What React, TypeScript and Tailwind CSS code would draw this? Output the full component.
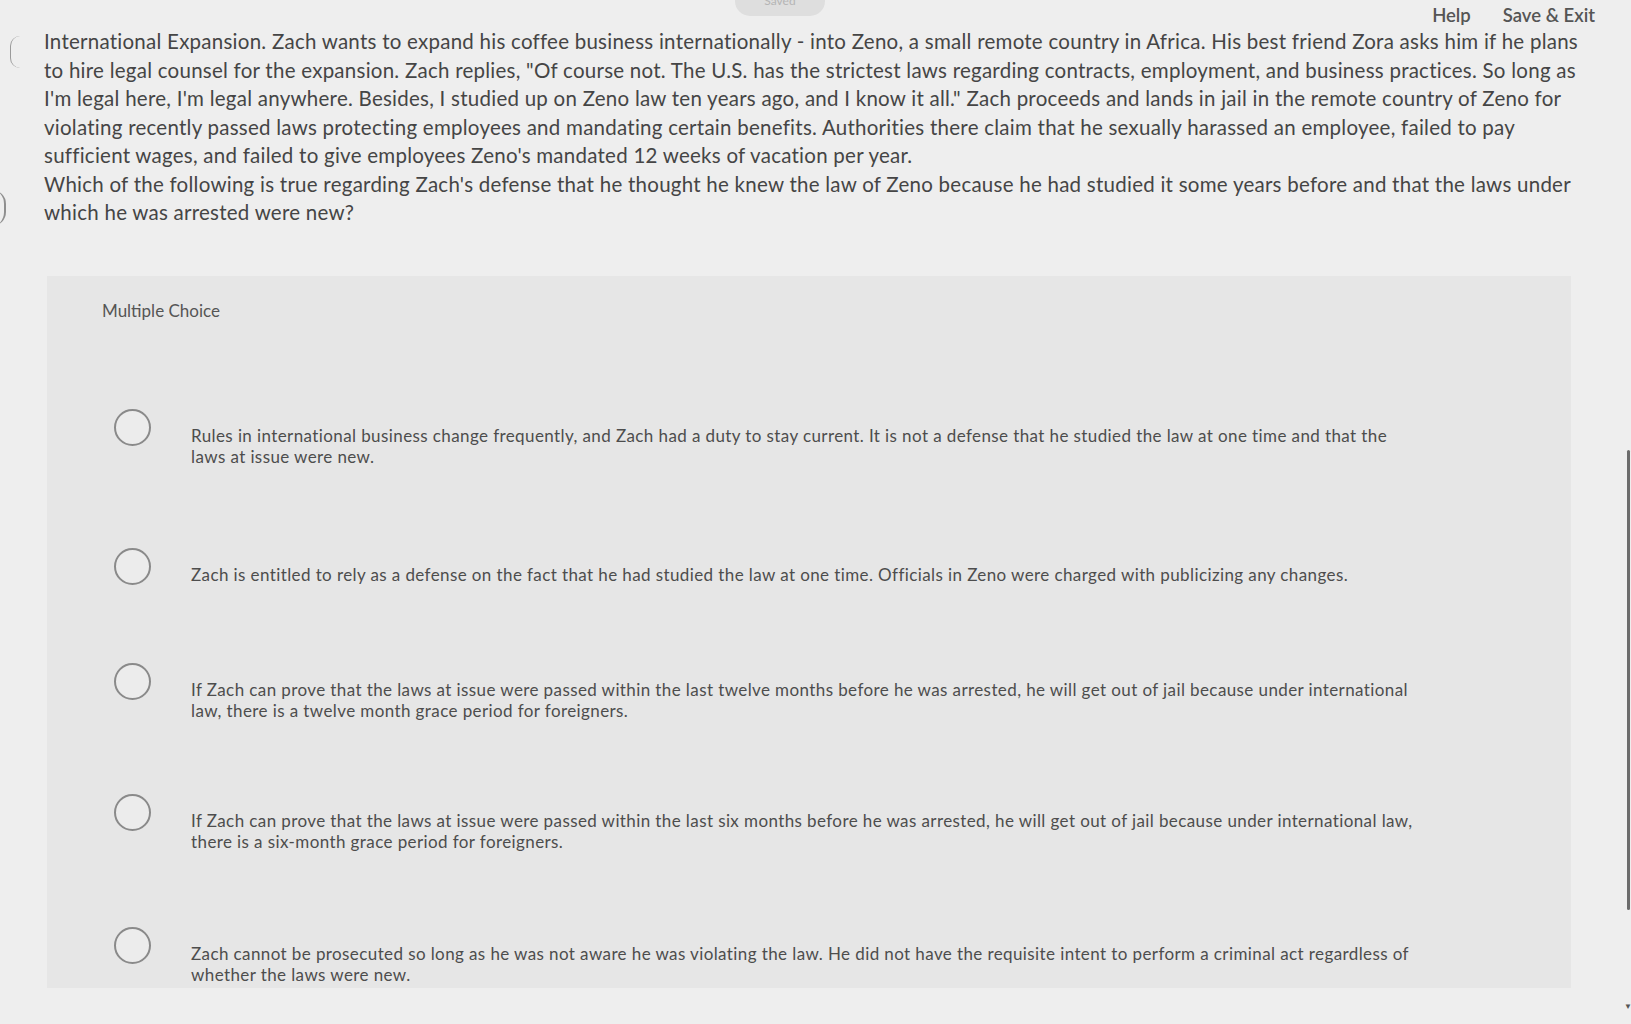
const questionLines = [
  'International Expansion. Zach wants to expand his coffee business internationally - into Zeno, a small remote country in Africa. His best friend Zora asks him if he plans',
  'to hire legal counsel for the expansion. Zach replies, "Of course not. The U.S. has the strictest laws regarding contracts, employment, and business practices. So long as',
  'I\'m legal here, I\'m legal anywhere. Besides, I studied up on Zeno law ten years ago, and I know it all." Zach proceeds and lands in jail in the remote country of Zeno for',
  'violating recently passed laws protecting employees and mandating certain benefits. Authorities there claim that he sexually harassed an employee, failed to pay',
  "sufficient wages, and failed to give employees Zeno's mandated 12 weeks of vacation per year.",
  "Which of the following is true regarding Zach's defense that he thought he knew the law of Zeno because he had studied it some years before and that the laws under",
  'which he was arrested were new?',
];

const options: { lines: string[]; gap: string }[] = [
  {
    lines: [
      'Rules in international business change frequently, and Zach had a duty to stay current. It is not a defense that he studied the law at one time and that the',
      'laws at issue were new.',
    ],
    gap: 'mt-0',
  },
  {
    lines: [
      'Zach is entitled to rely as a defense on the fact that he had studied the law at one time. Officials in Zeno were charged with publicizing any changes.',
    ],
    gap: 'mt-[97px]',
  },
  {
    lines: [
      'If Zach can prove that the laws at issue were passed within the last twelve months before he was arrested, he will get out of jail because under international',
      'law, there is a twelve month grace period for foreigners.',
    ],
    gap: 'mt-[94px]',
  },
  {
    lines: [
      'If Zach can prove that the laws at issue were passed within the last six months before he was arrested, he will get out of jail because under international law,',
      'there is a six-month grace period for foreigners.',
    ],
    gap: 'mt-[89px]',
  },
  {
    lines: [
      'Zach cannot be prosecuted so long as he was not aware he was violating the law. He did not have the requisite intent to perform a criminal act regardless of',
      'whether the laws were new.',
    ],
    gap: 'mt-[91px]',
  },
];

function Radio() {
  return (
    <span className="mt-[-16px] block h-[37px] w-[37px] shrink-0 rounded-full border-2 border-[#8a8a8a] bg-[#ececec]" />
  );
}

export default function App() {
  return (
    <div
      className="relative flex h-[1024px] w-[1631px] overflow-hidden bg-[#eeeeee] text-[#4a4a4a]"
      style={{ fontFamily: 'Lato, "Liberation Sans", sans-serif' }}
    >
      <header className="absolute inset-x-0 top-0 flex items-start pr-[36px]">
        <div className="ml-[735px] mt-[-14px] flex h-[30px] w-[90px] items-center justify-center rounded-full bg-[#dedede] text-[12px] text-[#b5b5b5]">
          Saved
        </div>
        <nav className="ml-auto mt-[3px] flex gap-[32px] text-[18.5px] leading-[24px] font-semibold text-[#555]">
          <span>Help</span>
          <span>Save &amp; Exit</span>
        </nav>
      </header>

      {/* left gutter: edge of the neighbouring panel */}
      <div className="flex w-[24px] shrink-0 flex-col pt-[36px]">
        <div className="ml-[10px] h-[32px] w-[10px] rounded-l-full border-l border-[#9a9a9a]" />
        <div className="ml-[-8px] mt-[122px] h-[36px] w-[14px] rounded-r-full border-r-2 border-[#8f8f8f]" />
      </div>

      <main className="flex-1">
        {/* question */}
        <div className="pl-[20px] pt-[27px] text-[20.5px] leading-[28.5px] tracking-[0.25px] text-[#454545]">
          {questionLines.map((l, i) => (
            <div key={i} className="whitespace-nowrap">
              {l}
            </div>
          ))}
        </div>

        {/* answer panel */}
        <div className="ml-[23px] mt-[49px] h-[712px] w-[1524px] bg-[#e6e6e6] pl-[55px] pt-[23px]">
          <div className="text-[17px] leading-[24px] text-[#555]">Multiple Choice</div>
          <div className="ml-[12px] mt-[102px]">
            {options.map((o, i) => (
              <div key={i} className={`flex items-start gap-[40px] ${o.gap}`}>
                <Radio />
                <div className="text-[17px] leading-[21px] tracking-[0.4px] text-[#4d4d4d]">
                  {o.lines.map((l, j) => (
                    <div key={j} className="whitespace-nowrap">
                      {l}
                    </div>
                  ))}
                </div>
              </div>
            ))}
          </div>
        </div>
      </main>

      {/* scrollbar */}
      <div className="flex w-[6px] shrink-0 flex-col items-center pb-[14px] pt-[450px]">
        <div className="h-[460px] w-[3px] rounded bg-[#6b6b6b]" />
        <div className="mt-auto text-[8px] leading-none text-[#555]">▼</div>
      </div>
    </div>
  );
}
